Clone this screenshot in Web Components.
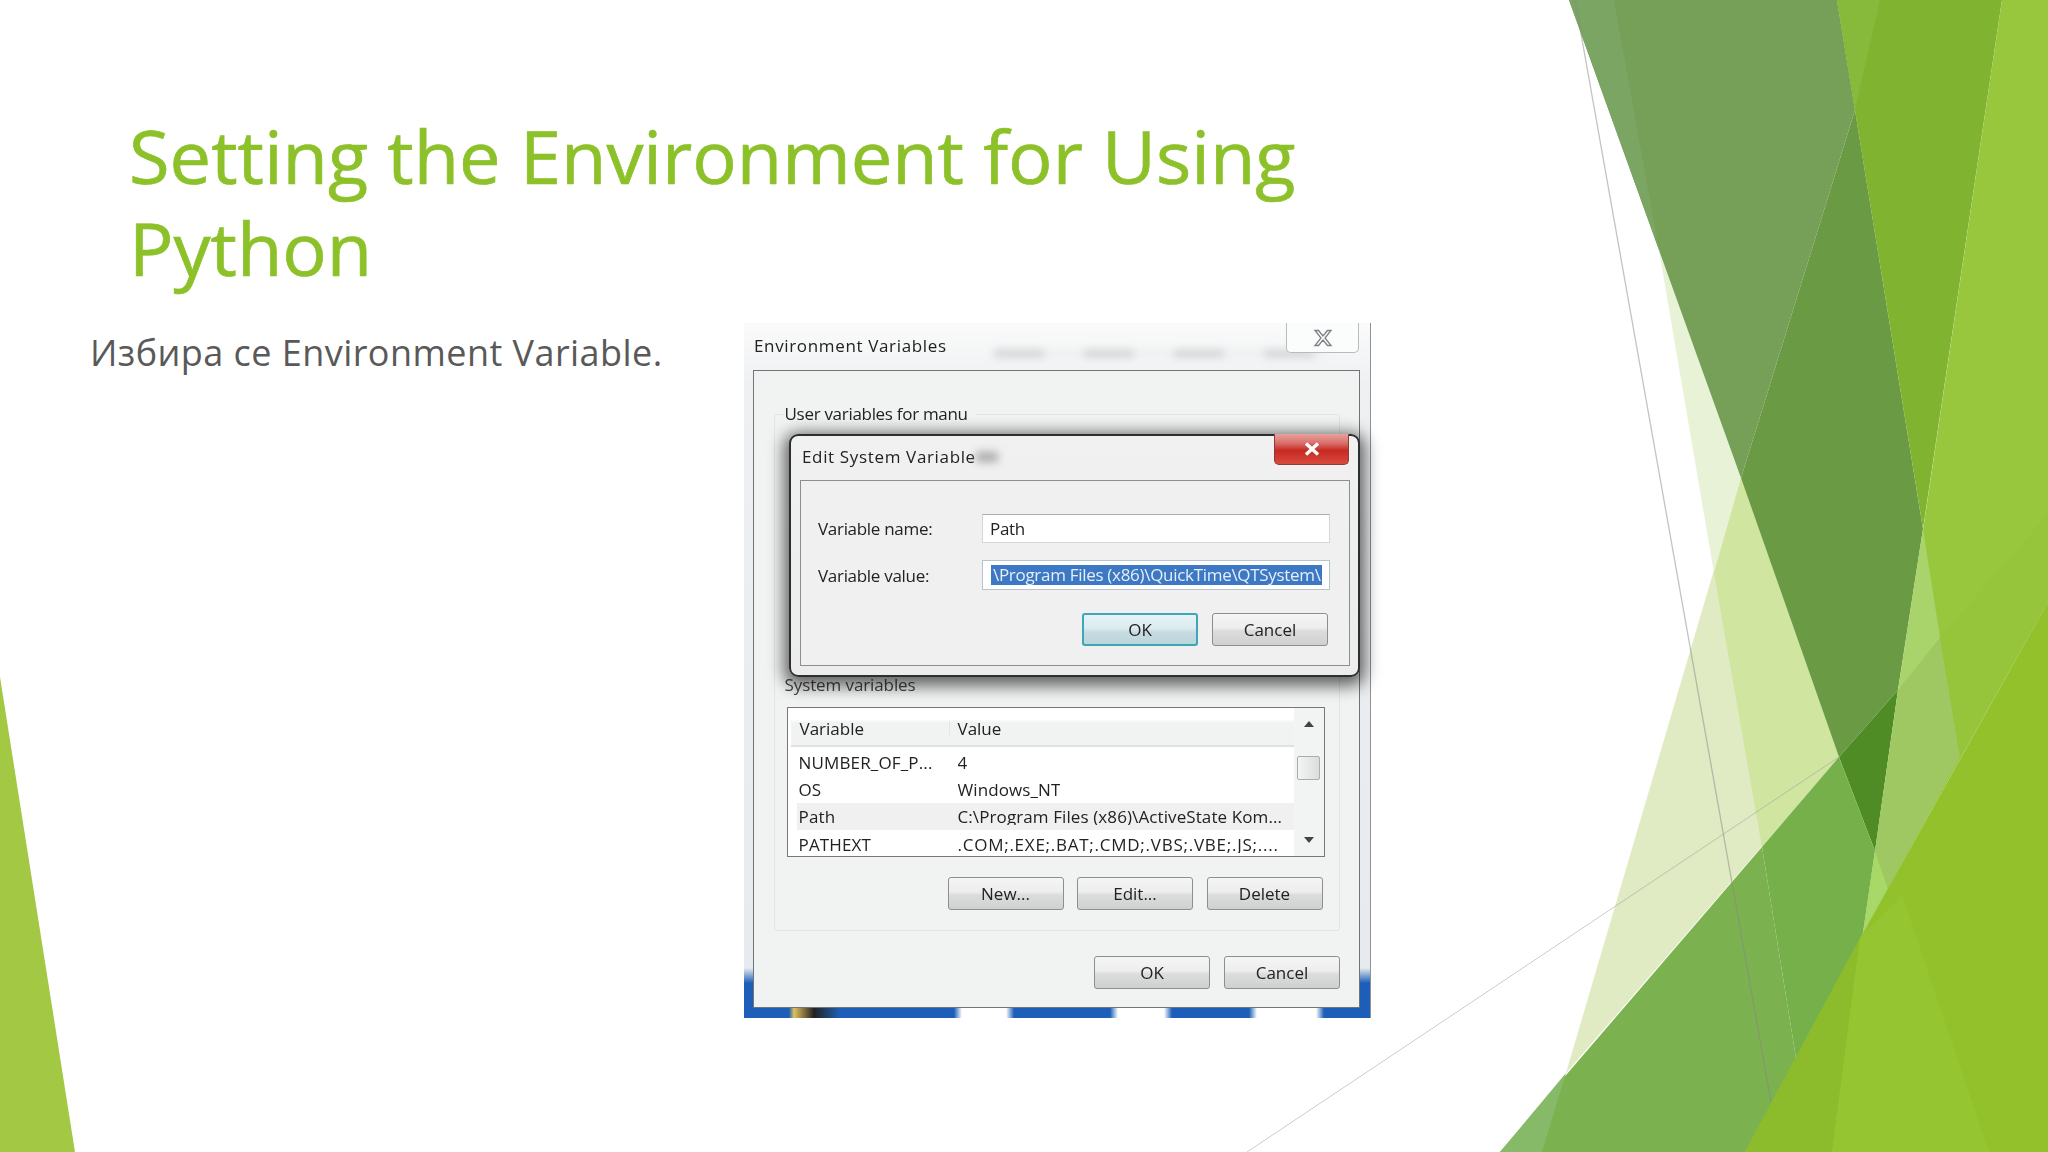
<!DOCTYPE html>
<html><head><meta charset="utf-8"><title>Setting the Environment for Using Python</title>
<style>html,body{margin:0;padding:0;background:#fff}</style></head>
<body>
<slide-page>
  <facet-bg slot="bg"></facet-bg>
  <slide-title>
    <span>Setting the Environment for Using</span>
    <span>Python</span>
  </slide-title>
  <slide-body>Избира се Environment Variable.</slide-body>
  <env-dialog slot="figure"></env-dialog>
</slide-page>
<script>
function def(name, css, html, init){
  customElements.define(name, class extends HTMLElement{
    constructor(){super();const r=this.attachShadow({mode:'open'});r.innerHTML='<style>'+css+'</style>'+html;}
    connectedCallback(){ if(init) init(this); }
  });
}
def('slide-page',`
  :host{display:block;position:relative;width:2048px;height:1152px;overflow:hidden;background:#fff;font-family:"Open Sans",sans-serif}
  .content{position:relative;display:flex;flex-direction:column;height:100%}
  .row{display:flex;align-items:flex-start}
`,`<slot name="bg"></slot>
  <div class="content">
    <slot></slot>
    <div class="row" style="position:absolute;left:652px;top:323px"><slot name="figure"></slot></div>
  </div>`);
def('facet-bg',`:host{position:absolute;inset:0;display:block}svg{display:block}`,
`<svg width="2048" height="1152" viewBox="0 0 2048 1152">
<polygon points="0,677 75,1152 0,1152" fill="#a2c844"/>
<polygon points="1741,478 1566,1073 1839,757" fill="#e0eac3"/>
<polygon points="1659,250 1741,478 1714,573" fill="#e8f2d6"/>
<polygon points="1741,478 1714,573 1762,847 1839,757" fill="#d0e5a0"/>
<line x1="1247" y1="1152" x2="1839" y2="757" stroke="#999" stroke-opacity=".5" stroke-width="1"/>
<polygon points="1569,0 1837,0 1855,110 1741,478" fill="#769f57"/>
<polygon points="1569,0 1614,0 1659,250" fill="#7aa563"/>
<polygon points="1855,110 1923,529 1898,690 1839,757 1741,478" fill="#6b9a45"/>
<polygon points="1837,0 2002,0 1923,529" fill="#80b330"/>
<polygon points="1837,0 1880,0 1855,110" fill="#87b93a"/>
<polygon points="2002,0 2048,0 2048,602 1863,933" fill="#98c63d"/>
<polygon points="1839,757 1898,690 1875,851" fill="#4f8c25"/>
<polygon points="1839,757 1875,851 1863,933 1800,1083 1762,847" fill="#76b04a"/>
<polygon points="1500,1152 1762,847 1800,1083 1745,1152" fill="#7bb14f"/>
<polygon points="1500,1152 1566,1073 1542,1152" fill="#86b968"/>
<polygon points="1923,529 1960,757 1888,889 1875,851 1898,690 1940,638" fill="#9fc862"/>
<polygon points="1923,529 1940,638 1898,690" fill="#a9d46c"/>
<polygon points="1875,851 1888,889 1863,933" fill="#a8d868"/>
<polygon points="1940,638 2048,514 2048,602 1960,757" fill="#96c43b"/>
<polygon points="1745,1152 1863,933 2048,602 2048,1152" fill="#92c12c"/>
<polygon points="1745,1152 1860,938 1832,1152" fill="#8cbc2b"/>
<polygon points="1832,1152 1860,938 1902,895 1989,1152" fill="#95c632"/>
<line x1="1575" y1="0" x2="1771" y2="1102" stroke="#888" stroke-opacity=".5" stroke-width="1.3"/>
</svg>`);
def('slide-title',`
  :host{display:block;padding:110px 0 0 129px;color:#8cc12a;font-size:74px;line-height:92px;position:relative;-webkit-text-stroke:.7px #8cc12a}
  ::slotted(span){display:block;white-space:nowrap}
`,`<slot></slot>`);
def('slide-body',`
  :host{display:block;padding:34px 0 0 90px;color:#595959;font-size:36px;line-height:50px;letter-spacing:.45px;position:relative;white-space:nowrap}
`,`<span><slot></slot></span>`);
def('win-button',`
  :host{display:flex;align-items:center;justify-content:center;box-sizing:border-box;width:116px;height:33px;border:1.5px solid #8b8f92;border-radius:3px;
    background:linear-gradient(#f5f5f5 0,#ededed 45%,#dcdcdc 55%,#cfd0d0 100%);color:#222;font:17px/1 "Open Sans",sans-serif}
  :host([default]){border:2px solid #3fa5b8;background:linear-gradient(#e6f3f6 0,#dcecf0 45%,#c6dbe0 60%,#bcd6dc 100%)}
`,`<slot></slot>`);
def('win-input',`
  :host{display:flex;align-items:center;box-sizing:border-box;width:348px;height:30px;background:#fff;border:1px solid #d4d8dc;border-top-color:#a9b0b5;padding:0 7px;font:17px/1 "Open Sans",sans-serif;color:#222;white-space:nowrap;overflow:hidden}
  :host([selected]){padding:0 7px 0 8px;border-color:#b8c4cc}
  :host([selected]) span{display:block;width:100%;background:#3c78c3;color:#e6eef6;line-height:20px;overflow:hidden;letter-spacing:-.3px;padding-left:2px}
`,`<span><slot></slot></span>`);
def('var-row',`
  :host{display:flex;box-sizing:border-box;height:27.3px;align-items:center;font:17px/1 "Open Sans",sans-serif;color:#222;white-space:nowrap;padding-left:3px;margin-left:9px}
  :host([hl]){background:#f0f0f0}
  .a{width:159px;flex:none;letter-spacing:.15px;margin-left:-1px;margin-right:1px} .b{letter-spacing:.1px;overflow:hidden;margin-left:-1px}
`,`<div class="a"><slot name="a"></slot></div><div class="b"><slot name="b"></slot></div>`);
def('var-list',`
  :host{display:flex;box-sizing:border-box;width:538px;height:150px;border:1.5px solid #777;background:#fff;overflow:hidden;font:17px/1 "Open Sans",sans-serif;color:#222}
  .main{width:506px;flex:none;overflow:hidden}
  .head{display:flex;margin-left:3px;border-bottom:2px solid #dfe1e2;background:linear-gradient(#fff 30%,#f1f2f2 40%,#f1f2f2);align-items:center;padding-top:4px;box-sizing:border-box;height:39px}
  .head div:first-child{width:149px;padding-left:9px;border-right:1px solid #e4e6e7}
  .head div:last-child{padding-left:8px}
  .rows{padding-top:1.500px}
  .sb{flex:1;display:flex;flex-direction:column;align-items:center;background:#f2f3f3;padding-top:13px;box-sizing:border-box}
  .up,.dn{width:0;height:0;border:5px solid transparent;flex:none}
  .up{border-bottom:6px solid #444;border-top:0}
  .dn{border-top:6px solid #444;border-bottom:0;margin-top:57px}
  .th{width:23px;height:24px;flex:none;box-sizing:border-box;border:1.5px solid #a9adb0;border-radius:2px;background:linear-gradient(90deg,#f4f4f4,#dcdcdc);margin-top:29px}
`,`<div class="main"><div class="head"><div>Variable</div><div>Value</div></div><div class="rows"><slot></slot></div></div>
 <div class="sb"><div class="up"></div><div class="th"></div><div class="dn"></div></div>`);
def('edit-dialog',`
  :host{position:absolute;left:45px;top:111px;width:571px;height:243px;box-sizing:border-box;border:2px solid #2c2f30;border-radius:9px;
    background:linear-gradient(#f1f1f1,#ececec);box-shadow:0 4px 16px 5px rgba(0,0,0,.6);display:flex;flex-direction:column;font:17px/1 "Open Sans",sans-serif;color:#222}
  .tb{height:44px;flex:none;display:flex;align-items:flex-start;padding:0 9px 0 11px;box-sizing:border-box;position:relative}
  .t{margin-top:10px;line-height:22px;letter-spacing:.65px}
  .smudge{width:22px;height:10px;background:#aaa;filter:blur(4px);margin:16px 0 0 0}
  .x{margin-left:auto;width:75px;height:31px;margin-top:-2px;box-sizing:border-box;border:1.5px solid #8d3b38;border-top:0;border-radius:0 0 5px 5px;
    background:linear-gradient(#e8a29c 0,#d9706a 30%,#c72a22 55%,#d94a3e 100%);display:flex;align-items:center;justify-content:center}
  .panel{flex:1;margin:0 8px 9px 9px;border:1.5px solid #8a8f90;display:flex;flex-direction:column;padding:33px 19px 0 17px;box-sizing:border-box;gap:17px;background:#f0f0f0}
  .f{display:flex;align-items:center;justify-content:space-between;letter-spacing:-.3px}
  .b{display:flex;justify-content:flex-end;gap:14px;margin-top:6px;padding-right:2px}
`,`<div class="tb"><span class="t">Edit System Variable</span><span class="smudge"></span>
   <div class="x"><svg width="18" height="14" viewBox="0 0 18 14"><path d="M3 1.500 15 12.500M15 1.500 3 12.500" stroke="#fff" stroke-width="3.4" fill="none"/></svg></div></div>
  <div class="panel">
    <div class="f"><span>Variable name:</span><win-input style="height:29px">Path</win-input></div>
    <div class="f"><span>Variable value:</span><win-input selected>\\Program Files (x86)\\QuickTime\\QTSystem\\</win-input></div>
    <div class="b"><win-button default>OK</win-button><win-button>Cancel</win-button></div>
  </div>`);
def('env-dialog',`
  :host{display:flex;flex-direction:column;position:relative;width:627px;height:695px;box-sizing:border-box;margin-left:92px;color:#222;font:17px/1 "Open Sans",sans-serif;filter:blur(.4px);
   background:
    linear-gradient(90deg,#1d5fb8 45px,#e0c060 50px,#222 70px,#1d5fb8 96px,#1d5fb8 210px,#fff 218px,#fff 262px,#1d5fb8 270px,#1d5fb8 366px,#fff 374px,#fff 420px,#1d5fb8 428px,#1d5fb8 505px,#fff 513px,#fff 572px,#1d5fb8 580px) bottom/100% 10px no-repeat,
    linear-gradient(transparent 645px,#1d5fb8 660px) left/9px 100% no-repeat,
    linear-gradient(transparent 645px,#1d5fb8 660px) right/11px 100% no-repeat,
    linear-gradient(#fbfbfb 0,#eef0f2 60px,#e6eaee 100%);
   border-right:1px solid #8d9296}
  .tb{height:47px;flex:none;display:flex;align-items:flex-start;padding-left:10px;box-sizing:border-box;position:relative}
  .t{margin-top:12px;line-height:22px;letter-spacing:.65px}
  .sm{position:absolute;left:250px;top:27px;width:330px;height:7px;background:repeating-linear-gradient(90deg,#9aa0a4 0 50px,#e6e8ea 50px 90px);filter:blur(4px);opacity:.45}
  .x{margin-left:auto;margin-right:11px;width:73px;height:30px;box-sizing:border-box;background:#fbfcfc;border:1.5px solid #b8bcc0;border-top:0;border-radius:0 0 5px 5px;display:flex;align-items:center;justify-content:center;position:relative}
  .panel{flex:1;margin:0 10px 10px 9px;border:1.5px solid #6f7478;background:#f1f3f2;display:flex;flex-direction:column;padding:31px 19px 0 19.5px;box-sizing:border-box;min-height:0}
  fieldset{margin:0;padding:0 14px 20px 12px;border:1px solid #e1e5e5;border-radius:3px;min-width:0;box-sizing:border-box;width:566px}
  legend{padding:0;margin-left:-2px;line-height:24px;letter-spacing:-.3px;padding-right:8px}
  .sp{height:247px}
  .lab{line-height:24px;margin-left:-2px;color:#444;margin-bottom:10px;letter-spacing:-.1px}
  .btns{display:flex;justify-content:flex-end;gap:13.5px;margin-top:20px;margin-right:2px}
  .foot{display:flex;justify-content:flex-end;gap:14px;margin-top:25px}
`,`<div class="tb"><span class="t">Environment Variables</span><span class="sm"></span>
    <div class="x"><svg width="20" height="18" viewBox="0 0 20 18"><path d="M2 1.500h3.500L10 7l4.500-5.500H18L12 9l6 7.500h-3.500L10 11l-4.500 5.500H2L8 9Z" fill="none" stroke="#7a8085" stroke-width="1.3"/></svg></div></div>
  <div class="panel">
    <fieldset><legend>User variables for manu</legend>
      <div class="sp"></div>
      <div class="lab">System variables</div>
      <var-list>
        <var-row><span slot="a">NUMBER_OF_P...</span><span slot="b">4</span></var-row>
        <var-row><span slot="a">OS</span><span slot="b">Windows_NT</span></var-row>
        <var-row hl><span slot="a">Path</span><span slot="b">C:\\Program Files (x86)\\ActiveState Kom...</span></var-row>
        <var-row><span slot="a">PATHEXT</span><span slot="b" style="letter-spacing:.75px">.COM;.EXE;.BAT;.CMD;.VBS;.VBE;.JS;....</span></var-row>
      </var-list>
      <div class="btns"><win-button>New...</win-button><win-button>Edit...</win-button><win-button>Delete</win-button></div>
    </fieldset>
    <div class="foot"><win-button>OK</win-button><win-button>Cancel</win-button></div>
  </div>
  <edit-dialog></edit-dialog>`);
</script>
</body></html>
